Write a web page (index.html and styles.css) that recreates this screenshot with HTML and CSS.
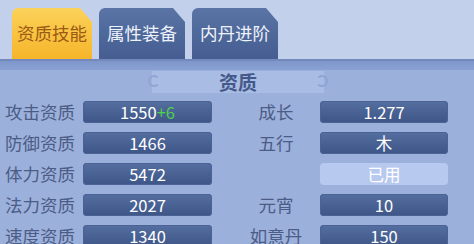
FILE: index.html
```html
<!DOCTYPE html>
<html lang="zh">

<head>
    <meta charset="UTF-8">
    <title>资质</title>
    <link rel="stylesheet" href="styles.css">
</head>

<body>
    <div class="tabs">
        <div class="tab active">资质技能</div>
        <div class="tab">属性装备</div>
        <div class="tab">内丹进阶</div>
    </div>

    <div class="panel">
        <div class="panel-top"></div>
        <div class="section-title">
            <span class="curl left"></span>
            <span class="title-text">资质</span>
            <span class="curl right"></span>
        </div>

        <div class="grid">
            <div class="label">攻击资质</div>
            <div class="value">1550<span class="bonus">+6</span></div>
            <div class="label right">成长</div>
            <div class="value">1.277</div>

            <div class="label">防御资质</div>
            <div class="value">1466</div>
            <div class="label right">五行</div>
            <div class="value">木</div>

            <div class="label">体力资质</div>
            <div class="value">5472</div>
            <div class="label right"></div>
            <div class="value used">已用</div>

            <div class="label">法力资质</div>
            <div class="value">2027</div>
            <div class="label right">元宵</div>
            <div class="value">10</div>

            <div class="label">速度资质</div>
            <div class="value">1340</div>
            <div class="label right">如意丹</div>
            <div class="value">150</div>
        </div>
    </div>
</body>

</html>
```

FILE: styles.css
```css
body {
    margin: 0;
    width: 474px;
    height: 244px;
    overflow: hidden;
    background-color: #c3d0ec;
    font-family: "Noto Sans CJK SC", "Noto Sans", sans-serif;
}

.tabs {
    display: flex;
    gap: 7px;
    padding: 8px 0 0 12px;
    height: 51px;
}

.tab {
    width: 86px;
    height: 51px;
    line-height: 50px;
    text-align: center;
    font-size: 17.5px;
    color: #eef2fa;
    background: linear-gradient(#5a74a6, #455d90);
    border-radius: 6px 0 0 0;
    clip-path: polygon(0 0, calc(100% - 12px) 0, 100% 14px, 100% 100%, 0 100%);
}

.tab.active {
    width: 80px;
    color: #9c5a14;
    background: linear-gradient(#fbd25a, #f6b52a);
}

.panel {
    background-color: #9cb0dc;
    height: 185px;
}

.panel-top {
    height: 9px;
    border-top: 2px solid #7389bb;
    background: linear-gradient(#7f96cb, #8aa1d4);
}

.section-title {
    position: relative;
    margin: 1px 0 0 152px;
    width: 172px;
    height: 22px;
    background-color: #a9bce4;
    text-align: center;
}

.title-text {
    font-size: 19px;
    font-weight: bold;
    line-height: 22px;
    color: #44588a;
}

.curl {
    position: absolute;
    top: 4px;
    width: 8px;
    height: 8px;
    border: 2px solid #8ea4d4;
    border-radius: 50%;
}

.curl.left {
    left: -4px;
    border-right-color: transparent;
}

.curl.right {
    right: -4px;
    border-left-color: transparent;
}

.grid {
    display: grid;
    grid-template-columns: 78px 129px 108px 128px;
    grid-auto-rows: 22px;
    row-gap: 9px;
    padding: 8px 0 0 5px;
}

.label {
    font-size: 17.5px;
    line-height: 22px;
    color: #4b5c85;
}

.label.right {
    padding-left: 20px;
    text-align: center;
}

.value {
    border-radius: 4px;
    background: linear-gradient(#556fa0, #3d5587);
    box-shadow: inset 0 0 0 1px #4a6294;
    color: #ffffff;
    font-size: 16.5px;
    line-height: 22px;
    text-align: center;
}

.value.used {
    background: #b8c9ef;
    box-shadow: none;
}

.bonus {
    color: #4fd24c;
}
```
